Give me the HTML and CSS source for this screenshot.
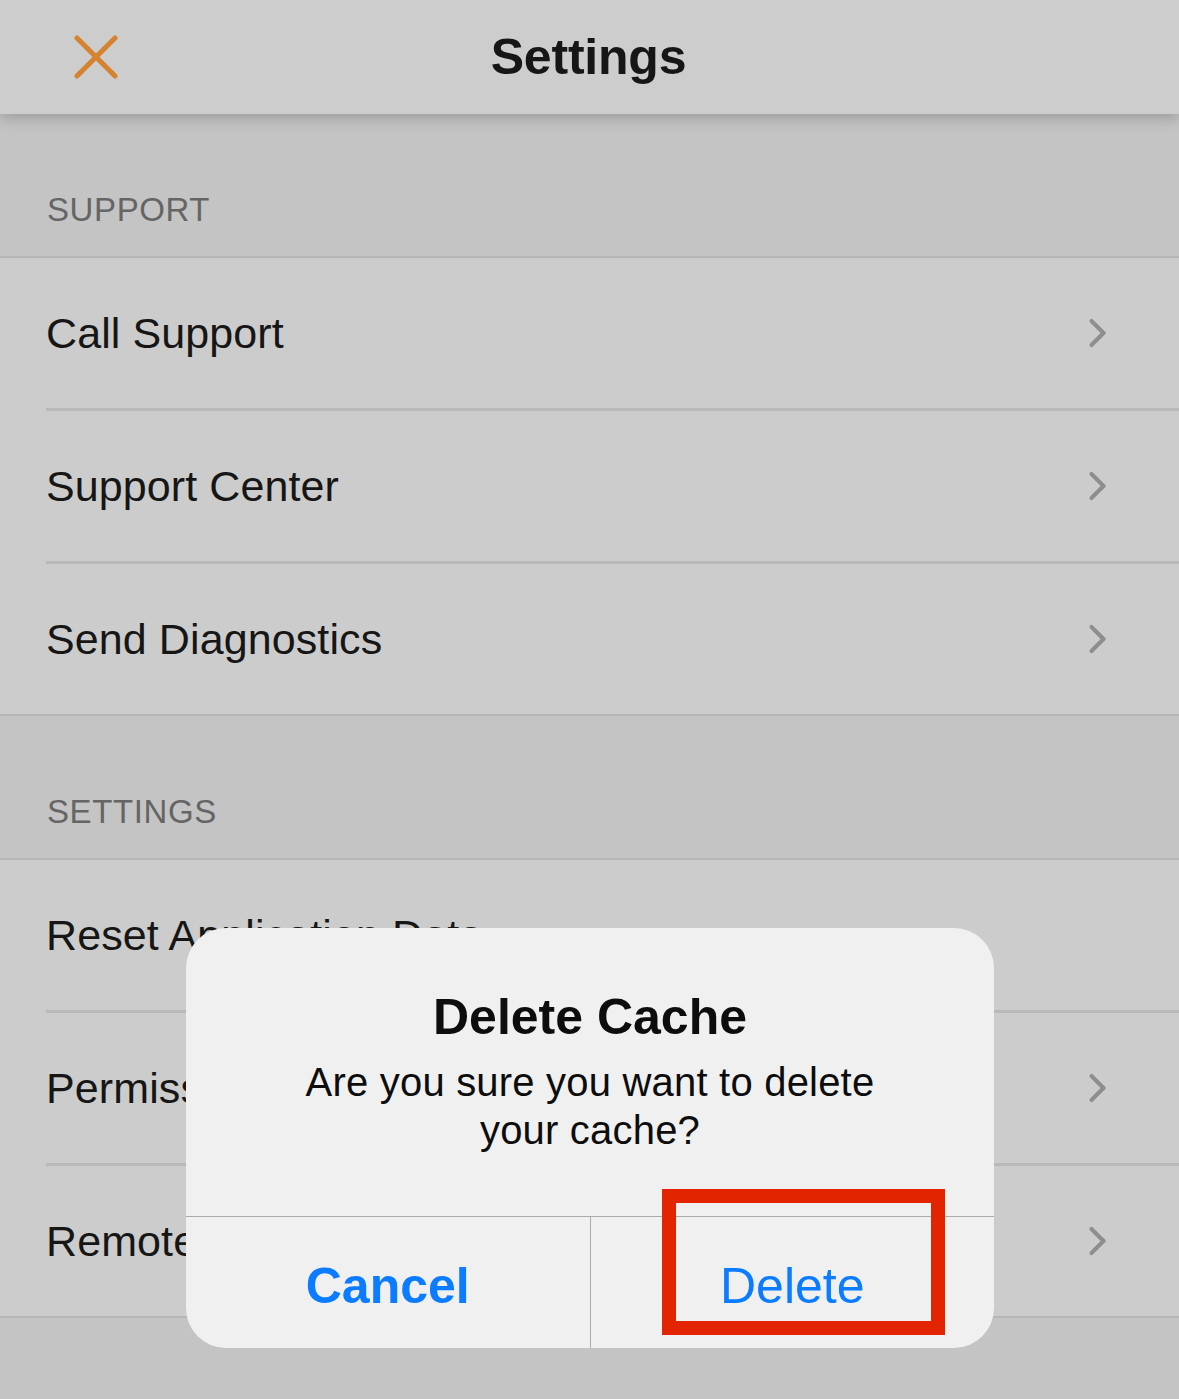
FILE: index.html
```html
<!DOCTYPE html>
<html lang="en">
<head>
<meta charset="utf-8">
<title>Settings</title>
<link rel="stylesheet" href="styles.css">
</head>
<body>
<div class="screen">
  <header class="navbar">
    <button class="close-btn" aria-label="Close">
      <svg width="44" height="44" viewBox="0 0 44 44"><path d="M3 3 L41 41 M41 3 L3 41" stroke="#d5832f" stroke-width="5" stroke-linecap="round" fill="none"/></svg>
    </button>
    <h1 class="nav-title">Settings</h1>
    <span class="nav-spacer"></span>
  </header>

  <section class="group">
    <div class="group-header">SUPPORT</div>
    <ul class="list">
      <li class="row"><span class="row-label">Call Support</span><span class="chev"></span></li>
      <li class="row"><span class="row-label">Support Center</span><span class="chev"></span></li>
      <li class="row"><span class="row-label">Send Diagnostics</span><span class="chev"></span></li>
    </ul>
  </section>

  <section class="group">
    <div class="group-header">SETTINGS</div>
    <ul class="list">
      <li class="row"><span class="row-label">Reset Application Data</span></li>
      <li class="row"><span class="row-label">Permissions</span><span class="chev"></span></li>
      <li class="row"><span class="row-label">Remote Support</span><span class="chev"></span></li>
    </ul>
  </section>

  <div class="alert" role="alertdialog">
    <div class="alert-body">
      <h2 class="alert-title">Delete Cache</h2>
      <p class="alert-msg">Are you sure you want to delete your cache?</p>
    </div>
    <div class="alert-actions">
      <button class="alert-btn cancel">Cancel</button>
      <button class="alert-btn delete">Delete</button>
    </div>
  </div>
  <div class="highlight"></div>
</div>
</body>
</html>
```

FILE: styles.css
```css
* { box-sizing: border-box; }
html, body { margin: 0; padding: 0; }
body {
  background: #c4c4c4;
  font-family: "Liberation Sans", Arial, sans-serif;
  color: #151515;
  width: 1179px;
  height: 1399px;
  overflow: hidden;
}
.screen {
  position: relative;
  width: 1179px;
  height: 1399px;
  background: #c4c4c4;
}
.navbar {
  position: relative;
  z-index: 2;
  height: 114px;
  background: #cdcdcd;
  display: flex;
  align-items: center;
  justify-content: space-between;
  padding: 0 60px 0 74px;
  box-shadow: 0 4px 14px rgba(0,0,0,0.22);
}
.close-btn {
  width: 44px;
  height: 44px;
  padding: 0;
  border: 0;
  background: none;
  display: flex;
  margin-top: -1px;
}
.nav-title {
  margin: 0;
  font-size: 50px;
  font-weight: 700;
  color: #161616;
  letter-spacing: -0.2px;
  margin-left: -16px;
  margin-top: 0px;
}
.nav-spacer { width: 44px; }

.group-header {
  height: 144px;
  display: flex;
  align-items: flex-end;
  padding: 0 0 26px 47px;
  font-size: 33px;
  line-height: 40px;
  letter-spacing: 0.6px;
  color: #656565;
  border-bottom: 2px solid #b6b6b6;
}
.list {
  list-style: none;
  margin: 0;
  padding: 0 0 0 46px;
  background: #cccccc;
  border-bottom: 2px solid #b6b6b6;
}
.row {
  height: 153px;
  display: flex;
  align-items: center;
  justify-content: space-between;
  padding-right: 75px;
  border-bottom: 3px solid #b9b9b9;
}
.row:last-child { border-bottom: 0; height: 150px; }
.row-label {
  font-size: 43px;
  letter-spacing: 0.1px;
  color: #161616;
}
.chev {
  width: 16px;
  height: 28px;
  position: relative;
}
.chev::before, .chev::after {
  content: "";
  position: absolute;
  left: -1px;
  width: 21px;
  height: 4px;
  border-radius: 2px;
  background: #8e8e8e;
}
.chev::before { top: 6px; transform: rotate(45deg); }
.chev::after { top: 18px; transform: rotate(-45deg); }

.alert {
  position: absolute;
  left: 186px;
  top: 928px;
  width: 808px;
  height: 420px;
  background: #f0f0f0;
  border-radius: 40px;
  display: flex;
  flex-direction: column;
  overflow: hidden;
  z-index: 3;
}
.alert-body {
  padding: 58px 110px 0;
  height: 289px;
  text-align: center;
  border-bottom: 1px solid #ababab;
}
.alert-title {
  margin: 0;
  font-size: 50px;
  line-height: 62px;
  font-weight: 700;
  color: #0d0d0d;
}
.alert-msg {
  margin: 10px 0 0;
  font-size: 40px;
  line-height: 48px;
  color: #0d0d0d;
  letter-spacing: 0.2px;
}
.alert-actions {
  flex: 1;
  display: flex;
}
.alert-btn {
  flex: 1;
  border: 0;
  background: none;
  font-family: "Liberation Sans", Arial, sans-serif;
  font-size: 50px;
  color: #0b7cff;
  padding: 6px 0 0;
}
.alert-btn.cancel {
  font-weight: 700;
  border-right: 1px solid #ababab;
}
.highlight {
  position: absolute;
  left: 662px;
  top: 1189px;
  width: 283px;
  height: 146px;
  border: 14px solid #e22400;
  z-index: 4;
}
```
